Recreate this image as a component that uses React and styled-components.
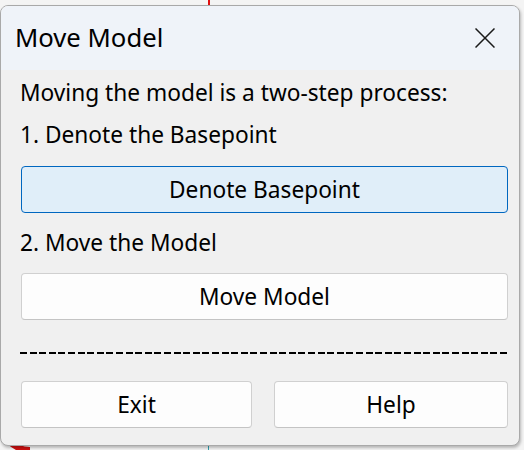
import React from "react";
import styled, { createGlobalStyle } from "styled-components";

const Global = createGlobalStyle`
  html, body { margin: 0; padding: 0; }
  body {
    background: #f4f4f4;
    font-family: "Noto Sans", "Open Sans", sans-serif;
    color: #000;
  }
`;

const Screen = styled.div`
  position: relative;
  width: 524px;
  height: 450px;
  overflow: hidden;
  padding-top: 5px;
  box-sizing: border-box;
  background: #f4f4f4;
`;

const Decor = styled.svg`
  position: absolute;
  left: 0;
  top: 0;
  width: 524px;
  height: 450px;
  pointer-events: none;
`;

const Window = styled.div`
  position: relative;
  width: 520px;
  height: 441px;
  box-sizing: border-box;
  border: 1px solid #a9a9a9;
  border-radius: 8px;
  overflow: hidden;
  background: #f0f0f0;
  box-shadow: 1px 2px 3px rgba(0, 0, 0, 0.25);
  display: flex;
  flex-direction: column;
`;

const TitleBar = styled.div`
  height: 64px;
  flex: none;
  background: #eff3f9;
  display: flex;
  align-items: center;
  justify-content: space-between;
  padding: 0 24px 0 14px;
`;

const Title = styled.div`
  font-size: 25.7px;
  line-height: 34px;
`;

const CloseIcon = styled.svg`
  width: 20px;
  height: 20px;
  display: block;
`;

const Body = styled.div`
  flex: 1;
  display: flex;
  flex-direction: column;
  padding: 8px 11px 0 20px;
`;

const Label = styled.div`
  font-size: 22.7px;
  line-height: 30px;
  height: 30px;
  margin: ${(p) => p.$mt || 0}px 0 0 -1px;
  white-space: nowrap;
`;

const Button = styled.button`
  box-sizing: border-box;
  height: 47px;
  width: 100%;
  margin: ${(p) => p.$mt || 0}px 0 0 0;
  padding: 0;
  font-family: inherit;
  font-size: 22.7px;
  color: #000;
  border-radius: 4px;
  background: ${(p) => (p.$primary ? "#e0eef9" : "#fdfdfd")};
  border: 1px solid ${(p) => (p.$primary ? "#0067c0" : "#d0d0d0")};
  border-bottom-color: ${(p) => (p.$primary ? "#0067c0" : "#c4c4c4")};
`;

const Dashes = styled.div`
  margin: 32px -2px 0 -1px;
  height: 2px;
  background: repeating-linear-gradient(
    90deg,
    #000 0 7px,
    transparent 7px 9.6px
  );
`;

const ButtonRow = styled.div`
  display: grid;
  grid-template-columns: 231px 1fr;
  gap: 22px;
  margin-top: 27px;
`;

export default function App() {
  return (
    <>
      <Global />
      <Screen>
        <Decor viewBox="0 0 524 450">
          <rect x="208" y="0" width="2" height="6" fill="#e01010" />
          <path d="M0 420 A30 30 0 0 0 30 450" stroke="#d01010" strokeWidth="6" fill="none" />
          <rect x="208" y="446" width="1" height="4" fill="#30a0b0" />
        </Decor>
        <Window>
          <TitleBar>
            <Title>Move Model</Title>
            <CloseIcon viewBox="0 0 20 20">
              <path d="M0.5 0.5 L19.5 19.5 M19.5 0.5 L0.5 19.5" stroke="#1a1a1a" strokeWidth="1.5" fill="none" />
            </CloseIcon>
          </TitleBar>
          <Body>
            <Label>Moving the model is a two-step process:</Label>
            <Label $mt={12}>1. Denote the Basepoint</Label>
            <Button $primary $mt={16}>Denote Basepoint</Button>
            <Label $mt={15}>2. Move the Model</Label>
            <Button $mt={15}>Move Model</Button>
            <Dashes />
            <ButtonRow>
              <Button>Exit</Button>
              <Button>Help</Button>
            </ButtonRow>
          </Body>
        </Window>
      </Screen>
    </>
  );
}
